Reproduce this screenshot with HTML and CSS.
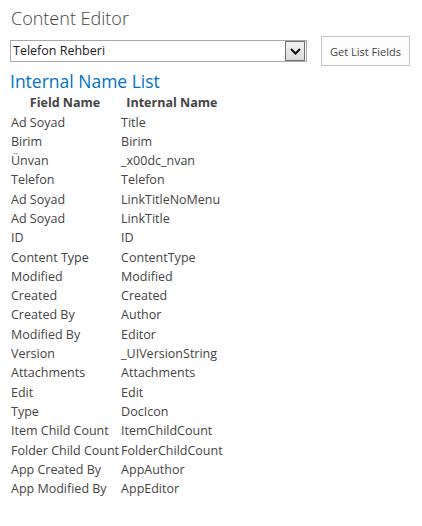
FILE: index.html
```html
<!DOCTYPE html>
<html>
<head>
<meta charset="utf-8">
<link rel="stylesheet" href="styles.css">
</head>
<body>
<div class="webpart">
  <h2 class="wp-title">Content Editor</h2>
  <div class="controls">
    <div class="dropdown">
      <span class="dropdown-value">Telefon Rehberi</span>
      <span class="dropdown-arrow">
        <svg width="11" height="7" viewBox="0 0 11 7"><path d="M1 1 L5.5 5.5 L10 1" fill="none" stroke="#111" stroke-width="2"/></svg>
      </span>
    </div>
    <button class="btn">Get List Fields</button>
  </div>
  <h3 class="list-title">Internal Name List</h3>
  <table class="fields">
    <thead>
      <tr><th>Field Name</th><th>Internal Name</th></tr>
    </thead>
    <tbody>
      <tr><td>Ad Soyad</td><td>Title</td></tr>
      <tr><td>Birim</td><td>Birim</td></tr>
      <tr><td>Ünvan</td><td>_x00dc_nvan</td></tr>
      <tr><td>Telefon</td><td>Telefon</td></tr>
      <tr><td>Ad Soyad</td><td>LinkTitleNoMenu</td></tr>
      <tr><td>Ad Soyad</td><td>LinkTitle</td></tr>
      <tr><td>ID</td><td>ID</td></tr>
      <tr><td>Content Type</td><td>ContentType</td></tr>
      <tr><td>Modified</td><td>Modified</td></tr>
      <tr><td>Created</td><td>Created</td></tr>
      <tr><td>Created By</td><td>Author</td></tr>
      <tr><td>Modified By</td><td>Editor</td></tr>
      <tr><td>Version</td><td>_UIVersionString</td></tr>
      <tr><td>Attachments</td><td>Attachments</td></tr>
      <tr><td>Edit</td><td>Edit</td></tr>
      <tr><td>Type</td><td>DocIcon</td></tr>
      <tr><td>Item Child Count</td><td>ItemChildCount</td></tr>
      <tr><td>Folder Child Count</td><td>FolderChildCount</td></tr>
      <tr><td>App Created By</td><td>AppAuthor</td></tr>
      <tr><td>App Modified By</td><td>AppEditor</td></tr>
    </tbody>
  </table>
</div>
</body>
</html>
```
FILE: styles.css
```css
html, body {
  margin: 0;
  padding: 0;
  background: #fff;
}
body {
  font-family: "Open Sans", "Noto Sans", sans-serif;
  color: #444;
  font-size: 12.5px;
}
.webpart {
  padding: 5px 0 0 10px;
}
.wp-title {
  margin: 0 0 0 1px;
  font-weight: 300;
  font-size: 18px;
  line-height: 26px;
  color: #444;
}
.controls {
  display: flex;
  align-items: center;
  gap: 14px;
  margin-top: 5px;
}
.dropdown {
  box-sizing: border-box;
  width: 297px;
  height: 22px;
  border: 1px solid #a8a8a8;
  display: flex;
  align-items: stretch;
  justify-content: space-between;
  background: #fff;
}
.dropdown-value {
  padding-left: 2px;
  line-height: 20px;
  color: #222;
}
.dropdown-arrow {
  box-sizing: border-box;
  width: 20px;
  margin: 0 1px 0 0;
  border: 1px solid #6e6e6e;
  background: linear-gradient(#f2f2f2, #dcdcdc);
  display: flex;
  align-items: center;
  justify-content: center;
}
.btn {
  box-sizing: border-box;
  width: 89px;
  height: 30px;
  border: 1px solid #c6c6c6;
  background: #fdfdfd;
  font-family: inherit;
  font-size: 11px;
  color: #444;
  padding: 0;
}
.list-title {
  margin: 3px 0 0 0;
  font-weight: 400;
  font-size: 17.5px;
  line-height: 24px;
  color: #0072c6;
}
.fields {
  border-collapse: collapse;
  margin-top: 0;
}
.fields th {
  font-weight: 700;
  text-align: center;
  padding: 0 1px;
  height: 19.5px;
  line-height: 19.5px;
}
.fields td {
  padding: 0 1px;
  height: 19.3px;
  line-height: 19.3px;
  white-space: nowrap;
}
```
